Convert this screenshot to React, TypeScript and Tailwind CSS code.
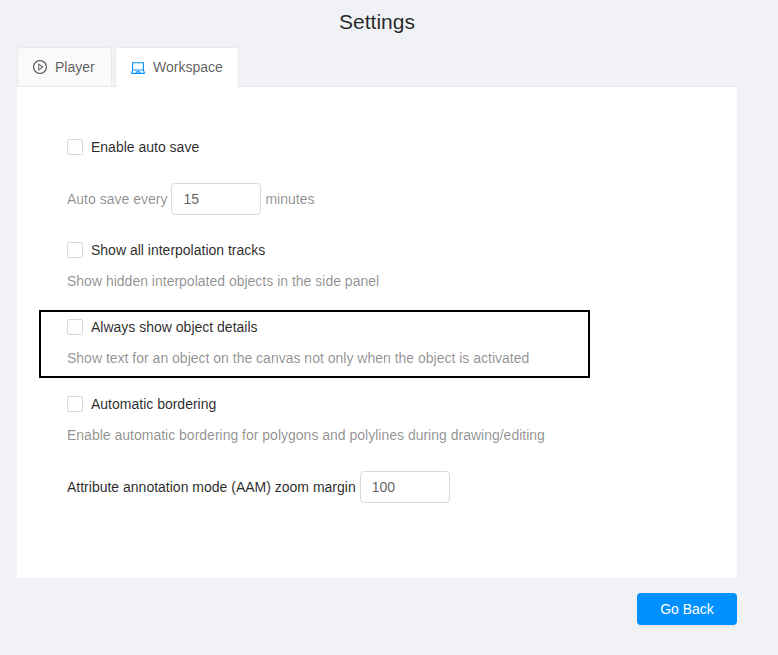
import React from "react";

function PlayIcon() {
  return (
    <svg viewBox="64 64 896 896" className="w-[14px] h-[14px] fill-current" aria-hidden="true">
      <path d="M512 64C264.6 64 64 264.6 64 512s200.6 448 448 448 448-200.6 448-448S759.4 64 512 64zm0 820c-205.4 0-372-166.6-372-372s166.6-372 372-372 372 166.6 372 372-166.6 372-372 372z" />
      <path d="M719.4 499.1l-296.1-215A15.9 15.9 0 00398 297v430c0 13.1 14.8 20.5 25.3 12.9l296.1-215a15.9 15.9 0 000-25.8zm-257.6 134V390.9L628.5 512 461.8 633.1z" />
    </svg>
  );
}

function LaptopIcon() {
  return (
    <svg viewBox="64 64 896 896" className="w-[14px] h-[14px] fill-current" aria-hidden="true">
      <path d="M956.9 845.1L896.4 632V168c0-17.7-14.3-32-32-32h-704c-17.7 0-32 14.3-32 32v464L67.9 845.1C60.4 866 75.8 888 98 888h828.8c22.2 0 37.6-22 30.1-42.9zM200.4 208h624v395h-624V208zm228.3 608l8.1-37h150.3l8.1 37H428.7zm224 0l-19.1-86.7c-.8-3.7-4.1-6.3-7.8-6.3H398.2c-3.8 0-7 2.6-7.8 6.3L371.3 816H151l42.3-149h638.2l42.3 149H652.7z" />
    </svg>
  );
}

function CheckRow({ label }: { label: string }) {
  return (
    <label className="flex items-center h-[22px] text-[14px] text-black/85">
      <span className="w-4 h-4 bg-white border border-[#d9d9d9] rounded-[2px] mr-2" />
      {label}
    </label>
  );
}

function Hint({ children }: { children: React.ReactNode }) {
  return <div className="h-[22px] flex items-center text-[14px] text-black/45">{children}</div>;
}

function NumberBox({ value }: { value: number }) {
  return (
    <div className="w-[90px] h-8 bg-white border border-[#d9d9d9] rounded-[4px] px-[11px] flex items-center text-[14px] text-black/65">
      {value}
    </div>
  );
}

export default function App() {
  return (
    <div className="min-h-[655px] bg-[#f0f2f5] font-['Liberation_Sans',Arial,sans-serif] overflow-hidden">
      <div className="w-[720px] ml-[17px]">
        <h1 className="h-[47px] pt-[7px] text-center text-[21px] leading-[30px] text-black/85">Settings</h1>

        <div className="flex h-10 gap-1 border-b border-[#e8e8e8] text-[14px] text-black/65">
          <div className="w-[95px] h-[39px] pl-[15px] flex items-center gap-2 bg-[#fafafa] border border-b-0 border-[#e8e8e8] rounded-t-[4px]">
            <PlayIcon />
            Player
          </div>
          <div className="w-[124px] h-10 -ml-px pl-[15px] flex items-center gap-2 bg-white border border-b-0 border-[#e8e8e8] rounded-t-[4px]">
            <span className="text-[#0090ff]">
              <LaptopIcon />
            </span>
            Workspace
          </div>
        </div>

        <div className="relative h-[491px] bg-white pl-[50px] pt-[49px]">
          <CheckRow label="Enable auto save" />

          <div className="flex items-center gap-1 mt-[25px] text-[14px] text-black/45">
            Auto save every
            <NumberBox value={15} />
            minutes
          </div>

          <div className="mt-6">
            <CheckRow label="Show all interpolation tracks" />
          </div>
          <div className="mt-[9px]">
            <Hint>Show hidden interpolated objects in the side panel</Hint>
          </div>

          <div className="mt-6">
            <CheckRow label="Always show object details" />
          </div>
          <div className="mt-[9px]">
            <Hint>Show text for an object on the canvas not only when the object is activated</Hint>
          </div>

          <div className="mt-6">
            <CheckRow label="Automatic bordering" />
          </div>
          <div className="mt-[9px]">
            <Hint>Enable automatic bordering for polygons and polylines during drawing/editing</Hint>
          </div>

          <div className="flex items-center gap-1 mt-[25px] text-[14px] text-black/85">
            Attribute annotation mode (AAM) zoom margin
            <NumberBox value={100} />
          </div>

          <div className="absolute left-[22px] top-[223px] w-[551px] h-[68px] border-2 border-black" />
        </div>

        <div className="flex justify-end mt-[15px]">
          <button className="w-[100px] h-8 bg-[#0090ff] text-white text-[14px] rounded-[4px] shadow-[0_2px_0_rgba(0,0,0,0.045)]">
            Go Back
          </button>
        </div>
      </div>
    </div>
  );
}
